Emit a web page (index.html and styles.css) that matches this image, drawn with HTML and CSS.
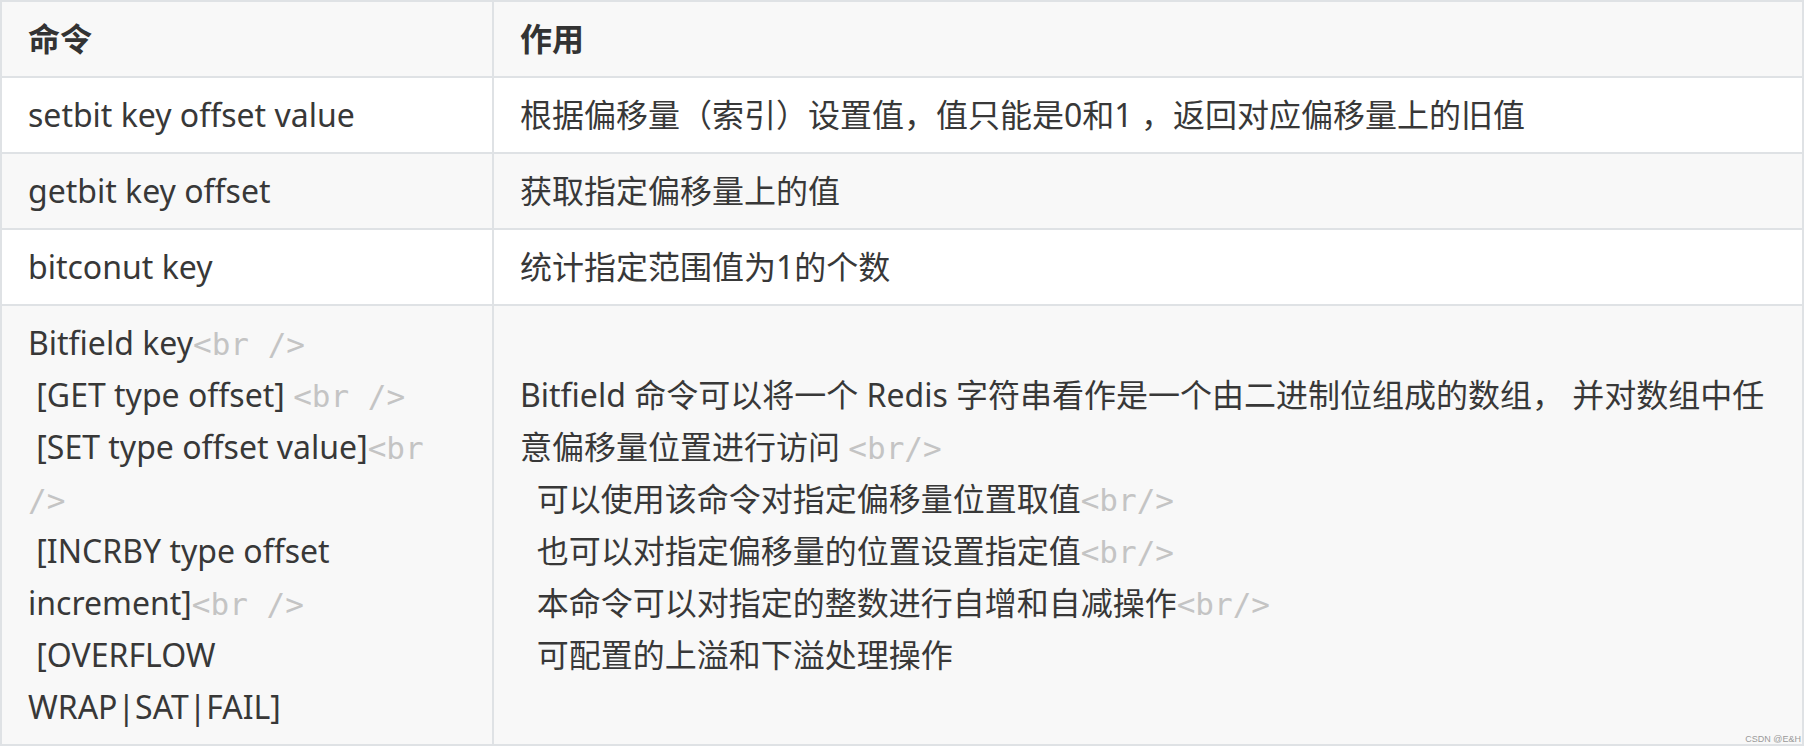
FILE: index.html
```html
<!DOCTYPE html>
<html lang="zh-CN">
<head>
<meta charset="utf-8">
<title>Bitmap 命令</title>
<link rel="stylesheet" href="styles.css">
</head>
<body>
<div class="wrap">
  <table class="cmd-table">
    <colgroup><col class="col-cmd"><col class="col-desc"></colgroup>
    <thead>
      <tr><th>命令</th><th>作用</th></tr>
    </thead>
    <tbody>
      <tr><td>setbit key offset value</td><td>根据偏移量（索引）设置值，值只能是0和1 ，返回对应偏移量上的旧值</td></tr>
      <tr><td>getbit key offset</td><td>获取指定偏移量上的值</td></tr>
      <tr><td>bitconut key</td><td>统计指定范围值为1的个数</td></tr>
      <tr>
        <td>Bitfield key<code>&lt;br /&gt;</code><br>&nbsp;[GET type offset] <code>&lt;br /&gt;</code><br>&nbsp;[SET type offset value]<code>&lt;br /&gt;</code><br>&nbsp;[INCRBY type offset increment]<code>&lt;br /&gt;</code><br>&nbsp;[OVERFLOW WRAP|SAT|FAIL]</td>
        <td>Bitfield 命令可以将一个 Redis 字符串看作是一个由二进制位组成的数组， 并对数组中任意偏移量位置进行访问 <code>&lt;br/&gt;</code><br>&nbsp;&nbsp;可以使用该命令对指定偏移量位置取值<code>&lt;br/&gt;</code><br>&nbsp;&nbsp;也可以对指定偏移量的位置设置指定值<code>&lt;br/&gt;</code><br>&nbsp;&nbsp;本命令可以对指定的整数进行自增和自减操作<code>&lt;br/&gt;</code><br>&nbsp;&nbsp;可配置的上溢和下溢处理操作</td>
      </tr>
    </tbody>
  </table>
  <span class="watermark">CSDN @E&amp;H</span>
</div>
</body>
</html>
```

FILE: styles.css
```css
html, body {
  margin: 0;
  padding: 0;
  background: #ffffff;
}

body {
  font-family: "Noto Sans", "Noto Sans CJK SC", sans-serif;
  color: #383838;
}

.wrap {
  position: relative;
  width: 1804px;
}

.cmd-table {
  border-collapse: collapse;
  table-layout: fixed;
  width: 1804px;
  font-size: 32px;
  line-height: 52px;
}

.col-cmd {
  width: 492px;
}

.cmd-table th,
.cmd-table td {
  border: 2px solid #dfe2e5;
  padding: 11px 26px;
  text-align: left;
  vertical-align: middle;
}

.cmd-table th {
  font-weight: 700;
  color: #333333;
}

.cmd-table thead tr {
  background: #f8f8f8;
}

.cmd-table tbody tr {
  background: #ffffff;
}

.cmd-table tbody tr:nth-child(2n) {
  background: #f8f8f8;
}

.cmd-table code {
  font-family: "DejaVu Sans Mono", "Liberation Mono", monospace;
  font-size: 31px;
  line-height: 1;
  color: #c4c4c4;
}

.watermark {
  position: absolute;
  right: 3px;
  bottom: 2px;
  font-family: "Liberation Sans", sans-serif;
  font-size: 9px;
  line-height: 10px;
  color: #9a9a9a;
}
```
